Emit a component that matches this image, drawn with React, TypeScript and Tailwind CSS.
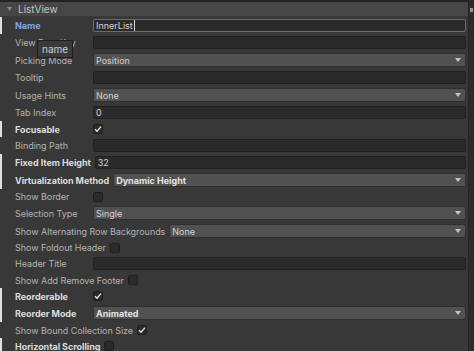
import React from 'react';

type Row =
  | { kind: 'text'; label: string; value?: string; bold?: boolean; focused?: boolean }
  | { kind: 'drop'; label: string; value: string; bold?: boolean }
  | { kind: 'check'; label: string; checked?: boolean; bold?: boolean; short?: boolean };

const rows: Row[] = [
  { kind: 'text', label: 'Name', value: 'InnerList', bold: true, focused: true },
  { kind: 'text', label: 'View Data Key' },
  { kind: 'drop', label: 'Picking Mode', value: 'Position' },
  { kind: 'text', label: 'Tooltip' },
  { kind: 'drop', label: 'Usage Hints', value: 'None' },
  { kind: 'text', label: 'Tab Index', value: '0' },
  { kind: 'check', label: 'Focusable', checked: true, bold: true },
  { kind: 'text', label: 'Binding Path' },
  { kind: 'text', label: 'Fixed Item Height', value: '32', bold: true },
  { kind: 'drop', label: 'Virtualization Method', value: 'Dynamic Height', bold: true },
  { kind: 'check', label: 'Show Border', short: true },
  { kind: 'drop', label: 'Selection Type', value: 'Single' },
  { kind: 'drop', label: 'Show Alternating Row Backgrounds', value: 'None' },
  { kind: 'check', label: 'Show Foldout Header', short: true },
  { kind: 'text', label: 'Header Title' },
  { kind: 'check', label: 'Show Add Remove Footer' },
  { kind: 'check', label: 'Reorderable', checked: true, bold: true },
  { kind: 'drop', label: 'Reorder Mode', value: 'Animated', bold: true },
  { kind: 'check', label: 'Show Bound Collection Size', checked: true },
  { kind: 'check', label: 'Horizontal Scrolling', bold: true },
];

function Check() {
  return (
    <svg width="8" height="8" viewBox="0 0 8 8" className="block">
      <path d="M1 4.2 L3 6.2 L7 1.6" stroke="#e6e6e6" strokeWidth="1.4" fill="none" />
    </svg>
  );
}

function Field({ row }: { row: Row }) {
  if (row.kind === 'check') {
    return (
      <div className="w-[10px] h-[10px] rounded-[2px] bg-[#2a2a2a] border border-[#1e1e1e] flex items-center justify-center">
        {row.checked && <Check />}
      </div>
    );
  }
  if (row.kind === 'drop') {
    return (
      <div className="flex-1 h-[14px] rounded-[2px] bg-[#515151] border border-[#303030] flex items-center justify-between pl-[2px] pr-[4px]">
        <span className={`${row.bold ? 'font-bold text-[#e4e4e4]' : 'text-[#d4d4d4]'}`}>{row.value}</span>
        <svg width="6" height="4" viewBox="0 0 6 4">
          <path d="M0 0 H6 L3 4 Z" fill="#c8c8c8" />
        </svg>
      </div>
    );
  }
  return (
    <div
      className={`flex-1 h-[13px] rounded-[2px] bg-[#2a2a2a] border flex items-center pl-[2px] ${
        row.focused ? 'border-[#6d6d6d]' : 'border-[#212121]'
      }`}
    >
      <span className="text-[#d6d6d6]">{row.value}</span>
      {row.focused && <span className="w-px h-[11px] bg-[#d6d6d6] ml-[1px]" />}
    </div>
  );
}

export default function App() {
  return (
    <div
      className="relative w-[474px] h-[351px] overflow-hidden bg-[#383838] flex text-[9px] leading-none"
      style={{ fontFamily: 'Inter, "Noto Sans", sans-serif' }}
    >
      <div className="flex-1 flex flex-col">
        {/* header */}
        <div className="h-[17px] shrink-0 bg-[#464646] border-t-2 border-[#232323] border-b border-b-[#3a3a3a] flex items-center pl-[7px] gap-[6px]">
          <svg width="5" height="4" viewBox="0 0 5 4">
            <path d="M0 0 H5 L2.5 4 Z" fill="#8a8a8a" />
          </svg>
          <span className="text-[#c4c4c4] text-[10px]">ListView</span>
        </div>

        {rows.map((row, i) => {
          const h =
            row.kind === 'check'
              ? row.short
                ? 'h-[15px]'
                : 'h-[16px]'
              : row.kind === 'drop'
              ? 'h-[18px]'
              : 'h-[17px]';
          return (
            <div key={i} className={`relative shrink-0 flex items-center ${h} pr-[2px]`}>
              {row.bold && <div className="absolute left-0 top-0 bottom-0 w-[2px] bg-[#e0e0e0]" />}
              <span
                className={`pl-[15px] pr-[4px] whitespace-nowrap tracking-[-0.05px] ${
                  row.kind === 'text' && row.focused
                    ? 'font-bold text-[#7ba7e6]'
                    : row.bold
                    ? 'font-bold text-[#dcdcdc]'
                    : 'text-[#b4b4b4]'
                }`}
                style={{ minWidth: 93 }}
              >
                {row.label}
              </span>
              <Field row={row} />
            </div>
          );
        })}
      </div>

      {/* scrollbar */}
      <div className="w-[6px] bg-[#2c2c2c] border-l border-[#232323] flex flex-col items-center pt-[8px]">
        <div className="w-[3px] h-[4px] bg-[#9a9a9a]" />
      </div>

      {/* tooltip */}
      <div className="absolute left-[37px] top-[40px] h-[18px] px-[4px] flex items-center bg-[#3a3a3a] border border-[#1e1e1e] text-[#d0d0d0] text-[10px]">
        name
      </div>
    </div>
  );
}
